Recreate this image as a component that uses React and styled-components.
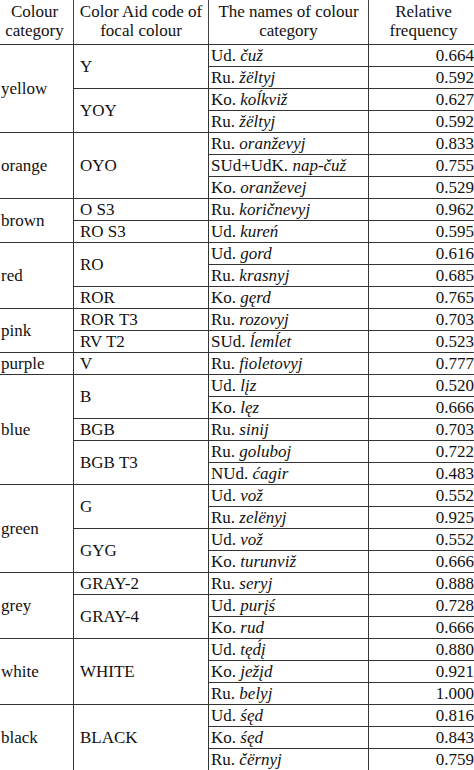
import React from 'react';
import styled, { createGlobalStyle } from 'styled-components';

const GlobalStyle = createGlobalStyle`
  html, body {
    margin: 0;
    padding: 0;
    background: #fff;
  }
  body {
    font-family: "Liberation Serif", "Times New Roman", serif;
    color: #111;
    overflow: hidden;
  }
`;

const Frame = styled.div`
  width: 474px;
  height: 770px;
  overflow: hidden;
`;

const Table = styled.table`
  border-collapse: collapse;
  table-layout: fixed;
  width: 483px;
  margin-left: -5px;
  font-size: 17px;
`;

const Col = styled.col`
  width: ${(p) => p.$w}px;
`;

const HeadCell = styled.th`
  font-weight: normal;
  text-align: center;
  vertical-align: top;
  line-height: 19px;
  padding: 2px 2px 4px;
  height: 38px;
  border-left: 1px solid #444;
  border-right: 1px solid #444;
  border-bottom: 1px solid #333;
`;

const Cell = styled.td`
  height: 21px;
  line-height: 21px;
  padding: 0;
  border: 1px solid #333;
  border-left-color: #444;
  white-space: nowrap;
  overflow: hidden;
`;

const CategoryCell = styled(Cell)`
  text-align: left;
  padding-left: 5px;
  vertical-align: middle;
`;

const CodeCell = styled(Cell)`
  text-align: left;
  padding-left: 6px;
  vertical-align: middle;
`;

const NameCell = styled(Cell)`
  text-align: left;
  padding-left: 2px;
`;

const Word = styled.i`
  font-style: italic;
`;

const FreqCell = styled(Cell)`
  text-align: right;
  padding-right: 4px;
`;

const groups = [
  {
    category: 'yellow',
    codes: [
      { code: 'Y', names: [['Ud.', 'čuž', '0.664'], ['Ru.', 'žëltyj', '0.592']] },
      { code: 'YOY', names: [['Ko.', 'koĺkviž', '0.627'], ['Ru.', 'žëltyj', '0.592']] },
    ],
  },
  {
    category: 'orange',
    codes: [
      {
        code: 'OYO',
        names: [
          ['Ru.', 'oranževyj', '0.833'],
          ['SUd+UdK.', 'nap-čuž', '0.755'],
          ['Ko.', 'oranževej', '0.529'],
        ],
      },
    ],
  },
  {
    category: 'brown',
    codes: [
      { code: 'O S3', names: [['Ru.', 'koričnevyj', '0.962']] },
      { code: 'RO S3', names: [['Ud.', 'kureń', '0.595']] },
    ],
  },
  {
    category: 'red',
    codes: [
      { code: 'RO', names: [['Ud.', 'gord', '0.616'], ['Ru.', 'krasnyj', '0.685']] },
      { code: 'ROR', names: [['Ko.', 'gęrd', '0.765']] },
    ],
  },
  {
    category: 'pink',
    codes: [
      { code: 'ROR T3', names: [['Ru.', 'rozovyj', '0.703']] },
      { code: 'RV T2', names: [['SUd.', 'ĺemĺet', '0.523']] },
    ],
  },
  {
    category: 'purple',
    codes: [{ code: 'V', names: [['Ru.', 'fioletovyj', '0.777']] }],
  },
  {
    category: 'blue',
    codes: [
      { code: 'B', names: [['Ud.', 'lįz', '0.520'], ['Ko.', 'lęz', '0.666']] },
      { code: 'BGB', names: [['Ru.', 'sinij', '0.703']] },
      { code: 'BGB T3', names: [['Ru.', 'goluboj', '0.722'], ['NUd.', 'ćagir', '0.483']] },
    ],
  },
  {
    category: 'green',
    codes: [
      { code: 'G', names: [['Ud.', 'vož', '0.552'], ['Ru.', 'zelënyj', '0.925']] },
      { code: 'GYG', names: [['Ud.', 'vož', '0.552'], ['Ko.', 'turunviž', '0.666']] },
    ],
  },
  {
    category: 'grey',
    codes: [
      { code: 'GRAY-2', names: [['Ru.', 'seryj', '0.888']] },
      { code: 'GRAY-4', names: [['Ud.', 'purįś', '0.728'], ['Ko.', 'rud', '0.666']] },
    ],
  },
  {
    category: 'white',
    codes: [
      {
        code: 'WHITE',
        names: [
          ['Ud.', 'tęd́į', '0.880'],
          ['Ko.', 'ježįd', '0.921'],
          ['Ru.', 'belyj', '1.000'],
        ],
      },
    ],
  },
  {
    category: 'black',
    codes: [
      {
        code: 'BLACK',
        names: [
          ['Ud.', 'śęd', '0.816'],
          ['Ko.', 'śęd', '0.843'],
          ['Ru.', 'čërnyj', '0.759'],
        ],
      },
    ],
  },
];

const buildRows = () => {
  const rows = [];
  groups.forEach((group) => {
    const total = group.codes.reduce((sum, c) => sum + c.names.length, 0);
    group.codes.forEach((entry, ci) => {
      entry.names.forEach(([lang, word, freq], ni) => {
        rows.push(
          <tr key={`${group.category}-${entry.code}-${ni}`}>
            {ci === 0 && ni === 0 && (
              <CategoryCell rowSpan={total}>{group.category}</CategoryCell>
            )}
            {ni === 0 && <CodeCell rowSpan={entry.names.length}>{entry.code}</CodeCell>}
            <NameCell>
              {lang} <Word>{word}</Word>
            </NameCell>
            <FreqCell>{freq}</FreqCell>
          </tr>
        );
      });
    });
  });
  return rows;
};

const App = () => (
  <>
    <GlobalStyle />
    <Frame>
      <Table>
        <colgroup>
          <Col $w={78} />
          <Col $w={135} />
          <Col $w={160} />
          <Col $w={110} />
        </colgroup>
        <thead>
          <tr>
            <HeadCell>
              Colour
              <br />
              category
            </HeadCell>
            <HeadCell>
              Color Aid code of
              <br />
              focal colour
            </HeadCell>
            <HeadCell>
              The names of colour
              <br />
              category
            </HeadCell>
            <HeadCell>
              Relative
              <br />
              frequency
            </HeadCell>
          </tr>
        </thead>
        <tbody>{buildRows()}</tbody>
      </Table>
    </Frame>
  </>
);

export default App;
